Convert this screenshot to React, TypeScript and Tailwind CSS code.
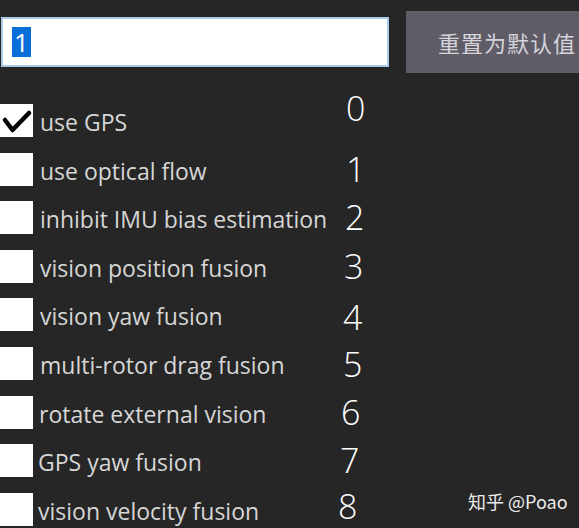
import React from "react";

const rows: { label: string; digit: string; checked?: boolean; textX: string; digitCls: string }[] = [
  { label: "use GPS", digit: "0", checked: true, textX: "ml-[7px]", digitCls: "ml-[306px] -translate-y-[12px]" },
  { label: "use optical flow", digit: "1", textX: "ml-[7px]", digitCls: "ml-[306px]" },
  { label: "inhibit IMU bias estimation", digit: "2", textX: "ml-[7px]", digitCls: "ml-[305px]" },
  { label: "vision position fusion", digit: "3", textX: "ml-[7px]", digitCls: "ml-[304px]" },
  { label: "vision yaw fusion", digit: "4", textX: "ml-[7px]", digitCls: "ml-[303px] translate-y-[3px]" },
  { label: "multi-rotor drag fusion", digit: "5", textX: "ml-[7px]", digitCls: "ml-[303px] translate-y-[1px]" },
  { label: "rotate external vision", digit: "6", textX: "ml-[6px]", digitCls: "ml-[302px]" },
  { label: "GPS yaw fusion", digit: "7", textX: "ml-[5px]", digitCls: "ml-[302px]" },
  { label: "vision velocity fusion", digit: "8", textX: "ml-[5px]", digitCls: "ml-[300px] -translate-y-[3px]" },
];

export default function App() {
  return (
    <div
      className="relative w-[579px] h-[528px] overflow-hidden bg-[#262626]"
      style={{ fontFamily: '"Open Sans", "Noto Sans", sans-serif' }}
    >
      {/* top row */}
      <div className="flex items-center pt-[11px] pl-[1px] gap-[17px]">
        <div className="w-[388px] h-[50px] shrink-0 bg-white border-2 border-[#a9c9e8] flex items-center pl-[9px]">
          <span className="bg-[#0a6fd8] text-white text-[26px] leading-[30px] h-[30px] px-[2px]">1</span>
        </div>
        <div
          className="w-[190px] h-[62px] shrink-0 bg-[#5f5c68] flex items-center pl-[32px] text-[#d4d4da] text-[22px] tracking-[1px]"
          style={{ fontFamily: '"Noto Sans CJK SC", sans-serif' }}
        >
          重置为默认值
        </div>
      </div>

      {/* rows */}
      <div className="mt-[31px] flex flex-col">
        {rows.map((r) => (
          <div key={r.digit} className="h-[48.6px] flex items-start shrink-0">
            <div className="w-[33px] h-[33px] shrink-0 bg-white flex items-center justify-center">
              {r.checked && (
                <svg width="33" height="33" viewBox="0 0 33 33">
                  <path d="M5 16 L12.5 26 L29 9" fill="none" stroke="#000" strokeWidth="4.5" strokeLinecap="round" strokeLinejoin="round" />
                </svg>
              )}
            </div>
            <div className={`${r.textX} w-0 whitespace-nowrap text-[23px] leading-[36px] text-[#d6d6d6]`}>{r.label}</div>
            <div className={`${r.digitCls} text-[34px] leading-[33px] font-light text-white`}>{r.digit}</div>
          </div>
        ))}
      </div>

      {/* watermark */}
      <div
        className="absolute left-[468px] top-[489px] text-[18px] leading-[24px] text-[#ececec] whitespace-nowrap"
        style={{ fontFamily: '"Noto Sans CJK SC", "Noto Sans", sans-serif' }}
      >
        知乎 @Poao
      </div>
    </div>
  );
}
